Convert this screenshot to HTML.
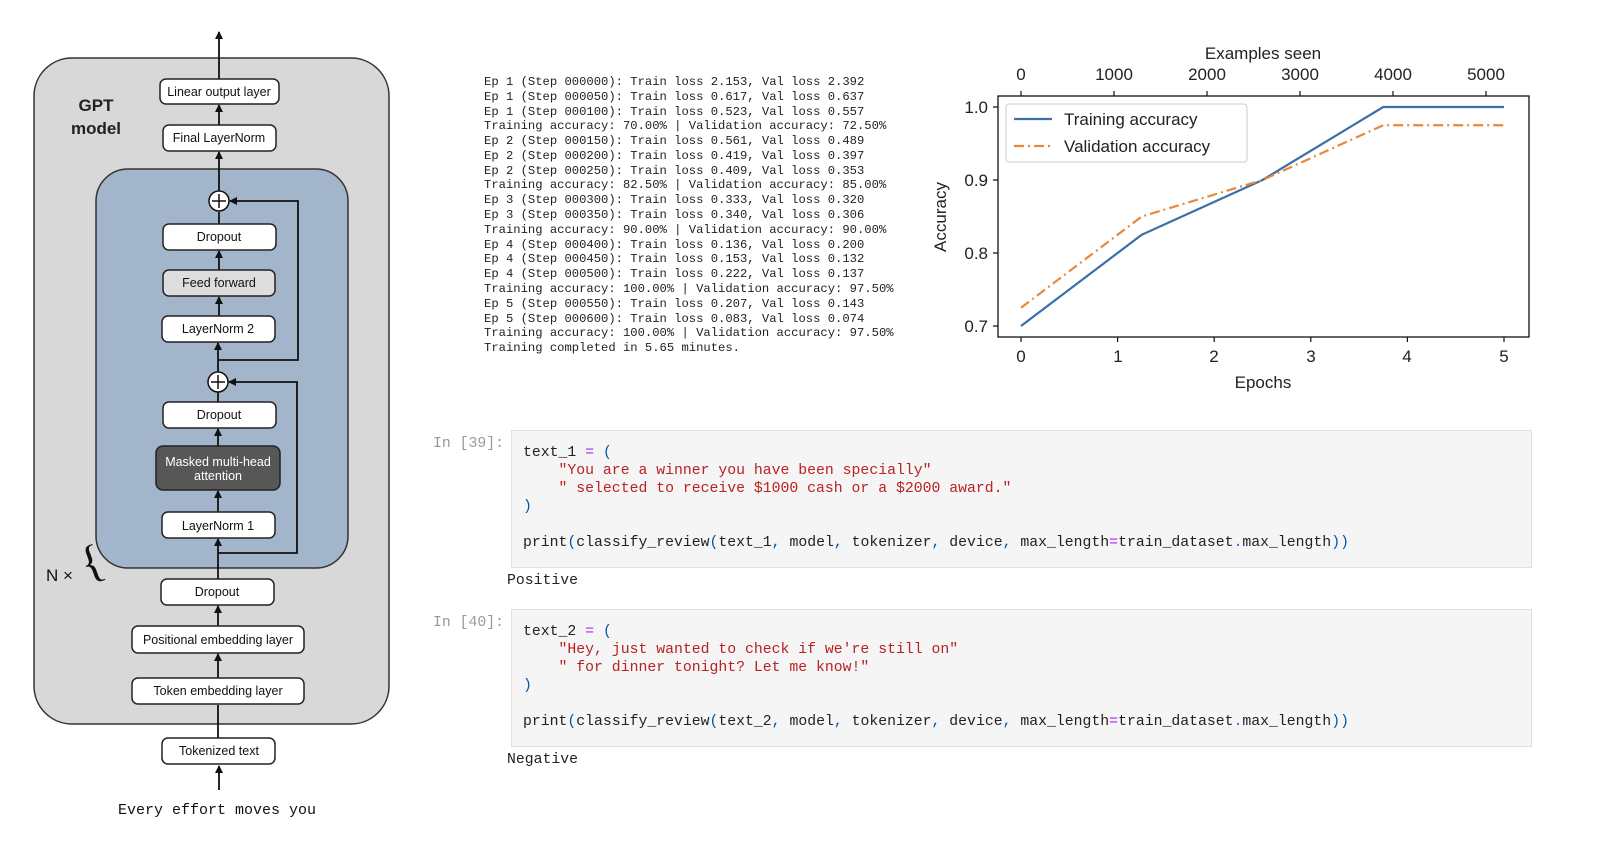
<!DOCTYPE html>
<html><head><meta charset="utf-8"><style>
body{margin:0;width:1600px;height:858px;background:#fff;overflow:hidden;position:relative;font-family:"Liberation Sans",sans-serif}
.log{position:absolute;left:484px;top:75px;font-family:"Liberation Mono",monospace;font-size:12.2px;line-height:14.78px;white-space:pre;color:#222}
.cell{position:absolute;left:511px;width:1019px;height:136px;background:#f5f5f5;border:1px solid #e0e0e0}
.code{position:absolute;left:523px;font-family:"Liberation Mono",monospace;font-size:14.8px;line-height:18px;white-space:pre;color:#222}
.pr{position:absolute;left:433px;font-family:"Liberation Mono",monospace;font-size:14.8px;color:#999}
.out{position:absolute;left:507px;font-family:"Liberation Mono",monospace;font-size:14.8px;color:#222}
.s{color:#ba2121}.o{color:#aa22ff}.p{color:#0055aa}
</style></head><body>
<svg width="1600" height="858" style="position:absolute;left:0;top:0" font-family="Liberation Sans, sans-serif">
<defs><marker id="a" markerWidth="8" markerHeight="8" refX="7" refY="4" orient="auto" markerUnits="userSpaceOnUse"><path d="M0,0 L8,4 L0,8 z" fill="#111"/></marker></defs>
<rect x="34" y="58" width="355" height="666" rx="38" fill="#d8d8d8" stroke="#333" stroke-width="1.5"/>
<rect x="96" y="169" width="252" height="399" rx="32" fill="#a3b5ca" stroke="#333" stroke-width="1.5"/>
<text x="96" y="111" font-size="17" font-weight="bold" text-anchor="middle" fill="#222">GPT</text>
<text x="96" y="134" font-size="17" font-weight="bold" text-anchor="middle" fill="#222">model</text>
<g stroke="#111" stroke-width="1.8" fill="none">
<line x1="219" y1="79" x2="219" y2="32" marker-end="url(#a)"/>
<line x1="219" y1="125" x2="219" y2="105" marker-end="url(#a)"/>
<line x1="219" y1="191" x2="219" y2="152" marker-end="url(#a)"/>
<line x1="219" y1="224" x2="219" y2="212"/>
<line x1="219" y1="270" x2="219" y2="251" marker-end="url(#a)"/>
<line x1="219" y1="316" x2="219" y2="297" marker-end="url(#a)"/>
<line x1="218" y1="372" x2="218" y2="343" marker-end="url(#a)"/>
<polyline points="218,360 298,360 298,201 230,201" marker-end="url(#a)"/>
<line x1="218" y1="402" x2="218" y2="392"/>
<line x1="218" y1="446" x2="218" y2="429" marker-end="url(#a)"/>
<line x1="218" y1="512" x2="218" y2="491" marker-end="url(#a)"/>
<line x1="218" y1="579" x2="218" y2="539" marker-end="url(#a)"/>
<polyline points="218,553 297,553 297,382 229,382" marker-end="url(#a)"/>
<line x1="218" y1="626" x2="218" y2="606" marker-end="url(#a)"/>
<line x1="218" y1="678" x2="218" y2="654" marker-end="url(#a)"/>
<line x1="218" y1="738" x2="218" y2="705"/>
<line x1="219" y1="790" x2="219" y2="766" marker-end="url(#a)"/>
</g>
<g stroke="#111" stroke-width="1.5">
<circle cx="219" cy="201" r="10" fill="#fff"/><path d="M212,201h14M219,194v14"/>
<circle cx="218" cy="382" r="10" fill="#fff"/><path d="M211,382h14M218,375v14"/>
</g>
<g stroke="#222" stroke-width="1.5" fill="#fff">
<rect x="160" y="79" width="119" height="25" rx="6"/>
<rect x="163" y="125" width="113" height="26" rx="6"/>
<rect x="163" y="224" width="113" height="26" rx="6"/>
<rect x="163" y="270" width="112" height="26" rx="6" fill="#ddd"/>
<rect x="162" y="316" width="113" height="26" rx="6"/>
<rect x="163" y="402" width="113" height="26" rx="6"/>
<rect x="156" y="446" width="124" height="44" rx="7" fill="#575757"/>
<rect x="162" y="512" width="113" height="26" rx="6"/>
<rect x="161" y="579" width="113" height="26" rx="6"/>
<rect x="132" y="626" width="172" height="27" rx="6"/>
<rect x="132" y="678" width="172" height="26" rx="6"/>
<rect x="162" y="738" width="113" height="26" rx="6"/>
</g>
<g font-size="12.5" text-anchor="middle" fill="#111">
<text x="219" y="96">Linear output layer</text>
<text x="219" y="142">Final LayerNorm</text>
<text x="219" y="241">Dropout</text>
<text x="219" y="287">Feed forward</text>
<text x="218" y="333">LayerNorm 2</text>
<text x="219" y="419">Dropout</text>
<text x="218" y="466" fill="#fff">Masked multi-head</text>
<text x="218" y="480" fill="#fff">attention</text>
<text x="218" y="530">LayerNorm 1</text>
<text x="217" y="596">Dropout</text>
<text x="218" y="644">Positional embedding layer</text>
<text x="218" y="695">Token embedding layer</text>
<text x="219" y="755">Tokenized text</text>
</g>
<text x="217" y="814" font-family="Liberation Mono, monospace" font-size="15" text-anchor="middle" fill="#111">Every effort moves you</text>
<text x="46" y="581" font-size="17" fill="#111">N ×</text>
<text x="80" y="576" font-size="46" fill="#111" font-family="Liberation Serif, serif" transform="rotate(-20 95 560)">{</text>
<!-- chart -->
<rect x="998" y="96" width="531" height="241" fill="#fff" stroke="#111" stroke-width="1.3"/>
<g stroke="#111" stroke-width="1.2">
<path d="M1021,337v5M1117.6,337v5M1214.2,337v5M1310.8,337v5M1407.4,337v5M1504,337v5"/>
<path d="M1021,96v-5M1114,96v-5M1207,96v-5M1300,96v-5M1393,96v-5M1486,96v-5"/>
<path d="M998,107h-5M998,180h-5M998,253h-5M998,326h-5"/>
</g>
<g font-size="17" fill="#222" text-anchor="middle">
<text x="1021" y="362">0</text><text x="1118" y="362">1</text><text x="1214" y="362">2</text><text x="1311" y="362">3</text><text x="1407" y="362">4</text><text x="1504" y="362">5</text>
<text x="1263" y="388">Epochs</text>
<text x="1021" y="80">0</text><text x="1114" y="80">1000</text><text x="1207" y="80">2000</text><text x="1300" y="80">3000</text><text x="1393" y="80">4000</text><text x="1486" y="80">5000</text>
<text x="1263" y="59">Examples seen</text>
<text x="1263" y="59" display="none"></text>
</g>
<g font-size="17" fill="#222" text-anchor="end">
<text x="988" y="113">1.0</text><text x="988" y="186">0.9</text><text x="988" y="259">0.8</text><text x="988" y="332">0.7</text>
</g>
<text x="946" y="217" font-size="17" fill="#222" text-anchor="middle" transform="rotate(-90 946 217)">Accuracy</text>
<polyline points="1021,326 1141.75,234.75 1262.5,180 1383.25,107 1504,107" fill="none" stroke="#3b70a8" stroke-width="2.2"/>
<polyline points="1021,307.75 1141.75,216.5 1262.5,180 1383.25,125.25 1504,125.25" fill="none" stroke="#e8883a" stroke-width="2.2" stroke-dasharray="10,4,2,4"/>
<rect x="1006" y="104" width="241" height="58" rx="3" fill="#fff" stroke="#ccc"/>
<line x1="1014" y1="119" x2="1052" y2="119" stroke="#3b70a8" stroke-width="2.2"/>
<line x1="1014" y1="146" x2="1052" y2="146" stroke="#e8883a" stroke-width="2.2" stroke-dasharray="10,4,2,4"/>
<text x="1064" y="125" font-size="17" fill="#222">Training accuracy</text>
<text x="1064" y="152" font-size="17" fill="#222">Validation accuracy</text>
</svg>
<div class="log">Ep 1 (Step 000000): Train loss 2.153, Val loss 2.392
Ep 1 (Step 000050): Train loss 0.617, Val loss 0.637
Ep 1 (Step 000100): Train loss 0.523, Val loss 0.557
Training accuracy: 70.00% | Validation accuracy: 72.50%
Ep 2 (Step 000150): Train loss 0.561, Val loss 0.489
Ep 2 (Step 000200): Train loss 0.419, Val loss 0.397
Ep 2 (Step 000250): Train loss 0.409, Val loss 0.353
Training accuracy: 82.50% | Validation accuracy: 85.00%
Ep 3 (Step 000300): Train loss 0.333, Val loss 0.320
Ep 3 (Step 000350): Train loss 0.340, Val loss 0.306
Training accuracy: 90.00% | Validation accuracy: 90.00%
Ep 4 (Step 000400): Train loss 0.136, Val loss 0.200
Ep 4 (Step 000450): Train loss 0.153, Val loss 0.132
Ep 4 (Step 000500): Train loss 0.222, Val loss 0.137
Training accuracy: 100.00% | Validation accuracy: 97.50%
Ep 5 (Step 000550): Train loss 0.207, Val loss 0.143
Ep 5 (Step 000600): Train loss 0.083, Val loss 0.074
Training accuracy: 100.00% | Validation accuracy: 97.50%
Training completed in 5.65 minutes.</div>
<div class="pr" style="top:436px">In [39]:</div>
<div class="cell" style="top:430px"></div>
<div class="code" style="top:444px">text_1 <span class="o">=</span> <span class="p">(</span>
    <span class="s">"You are a winner you have been specially"</span>
    <span class="s">" selected to receive $1000 cash or a $2000 award."</span>
<span class="p">)</span>

print<span class="p">(</span>classify_review<span class="p">(</span>text_1<span class="p">,</span> model<span class="p">,</span> tokenizer<span class="p">,</span> device<span class="p">,</span> max_length<span class="o">=</span>train_dataset<span class="o">.</span>max_length<span class="p">))</span></div>
<div class="out" style="top:573px">Positive</div>
<div class="pr" style="top:615px">In [40]:</div>
<div class="cell" style="top:609px"></div>
<div class="code" style="top:623px">text_2 <span class="o">=</span> <span class="p">(</span>
    <span class="s">"Hey, just wanted to check if we're still on"</span>
    <span class="s">" for dinner tonight? Let me know!"</span>
<span class="p">)</span>

print<span class="p">(</span>classify_review<span class="p">(</span>text_2<span class="p">,</span> model<span class="p">,</span> tokenizer<span class="p">,</span> device<span class="p">,</span> max_length<span class="o">=</span>train_dataset<span class="o">.</span>max_length<span class="p">))</span></div>
<div class="out" style="top:752px">Negative</div>
</body></html>
